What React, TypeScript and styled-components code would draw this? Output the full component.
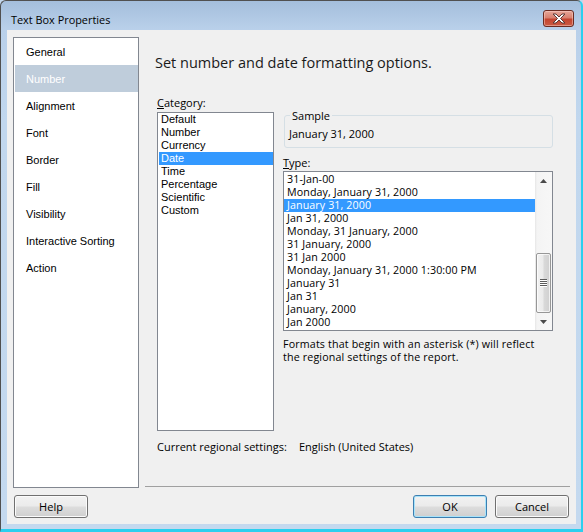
import React from "react";
import styled, { createGlobalStyle } from "styled-components";

const UI = `"Open Sans", "Noto Sans", sans-serif`;
const SANS = `"Liberation Sans", Arial, sans-serif`;

const Global = createGlobalStyle`
  html, body { margin: 0; padding: 0; background: #c2d7ee; }
  #root { width: 583px; height: 532px; }
  * { box-sizing: border-box; }
`;

const Window = styled.div`
  width: 583px;
  height: 532px;
  display: flex;
  flex-direction: column;
  background: linear-gradient(to bottom, #a4bedc 0px, #b9d0ea 28px, #c1d7ee 120px, #c4d9ef 100%);
  border-top: 1px solid #505050;
  border-left: 1px solid #505050;
  border-right: 2px solid #2ccfee;
  border-bottom: 3px solid #2ccfee;
  border-radius: 6px 6px 0 0;
  padding: 0 5px 4px 6px;
`;

const TitleBar = styled.div`
  height: 29px;
  display: flex;
  align-items: flex-start;
  justify-content: space-between;
`;

const Title = styled.span`
  margin: 11px 0 0 4px;
  font: 10.9px/15px ${UI};
  color: #000;
`;

const CloseButton = styled.div`
  width: 31px;
  height: 17px;
  margin: 9px 2px 0 0;
  border: 1px solid #6b2b21;
  border-radius: 3px;
  background: linear-gradient(to bottom, #e6a698 0%, #d8806f 45%, #c4442f 55%, #cb5b43 100%);
  box-shadow: inset 0 0 0 1px rgba(255, 220, 210, 0.45);
  display: flex;
  align-items: center;
  justify-content: center;
`;

const Client = styled.div`
  height: 494px;
  background: #f0f0f0;
  display: grid;
  grid-template-columns: 126px 1fr;
  grid-template-rows: 451px 1fr;
  column-gap: 6px;
  padding: 7px 6px 0 6px;
`;

const Nav = styled.div`
  border: 1px solid #828790;
  background: #fff;
  height: 451px;
`;

const NavItem = styled.div<{ $active?: boolean }>`
  height: 27px;
  margin-left: 1px;
  padding-left: 11px;
  display: flex;
  align-items: center;
  font: 11px ${SANS};
  color: ${(p) => (p.$active ? "#ffffff" : "#000000")};
  background: ${(p) => (p.$active ? "#bfcddb" : "transparent")};
`;

const Content = styled.div`
  height: 450px;
  border-bottom: 1px solid #a0a0a0;
  padding: 15px 0 0 12px;
`;

const Heading = styled.div`
  margin-left: -2px;
  font: 14.5px/21px ${UI};
  color: #1a1a1a;
`;

const Columns = styled.div`
  margin-top: 21px;
  display: grid;
  grid-template-columns: 117px 270px;
  column-gap: 9px;
  align-items: start;
`;

const Column = styled.div`
  display: flex;
  flex-direction: column;
`;

const Label = styled.div`
  height: 18px;
  padding-top: 1px;
  font: 11px/15px ${UI};
  color: #000;
`;

const CategoryList = styled.div`
  height: 319px;
  border: 1px solid #828790;
  background: #fff;
  padding-left: 1px;
`;

const CategoryItem = styled.div<{ $selected?: boolean }>`
  height: 13px;
  line-height: 13px;
  padding-left: 2px;
  font-family: ${SANS};
  font-size: 11px;
  white-space: nowrap;
  color: ${(p) => (p.$selected ? "#fff" : "#000")};
  background: ${(p) => (p.$selected ? "#3399ff" : "transparent")};
`;

const GroupBox = styled.fieldset`
  margin: 14px 0 0 1px;
  width: 269px;
  padding: 3px 4px 6px 4px;
  border: 1px solid #d5dfe5;
  border-radius: 3px;
  min-width: 0;
`;

const Legend = styled.legend`
  padding: 0 2px;
  margin-left: 1px;
  font: 11px/15px ${UI};
  color: #000;
`;

const SampleText = styled.div`
  font: 11px/15px ${UI};
  color: #000;
`;

const TypeLabel = styled.div`
  margin-top: 7px;
  height: 16px;
  font: 11px/15px ${UI};
  color: #000;
`;

const TypeList = styled.div`
  height: 160px;
  border: 1px solid #828790;
  background: #fff;
  display: flex;
`;

const TypeItems = styled.div`
  flex: 1;
  overflow: hidden;
  padding-top: 1px;
`;

const TypeItem = styled.div<{ $selected?: boolean }>`
  height: 13px;
  padding-left: 3px;
  line-height: 13px;
  font-family: ${UI};
  font-size: 10.7px;
  letter-spacing: 0.1px;
  white-space: nowrap;
  color: ${(p) => (p.$selected ? "#fff" : "#000")};
  background: ${(p) => (p.$selected ? "#3399ff" : "transparent")};
`;

const Scrollbar = styled.div`
  width: 17px;
  display: flex;
  flex-direction: column;
  background: linear-gradient(to right, #e6e6e6 0px, #f4f4f4 2px, #f7f7f7 100%);
`;

const ArrowButton = styled.div`
  height: 17px;
  display: flex;
  align-items: center;
  justify-content: center;
`;

const Track = styled.div`
  flex: 1;
  display: flex;
  flex-direction: column;
  justify-content: flex-end;
  padding: 0 1px;
`;

const Thumb = styled.div`
  height: 60px;
  border: 1px solid #979797;
  border-radius: 2px;
  background: linear-gradient(to right, #f2f2f2 0%, #ebebeb 45%, #d9d9d9 55%, #d0d0d0 100%);
  box-shadow: inset 0 0 0 1px rgba(255, 255, 255, 0.7);
  display: flex;
  align-items: center;
  justify-content: center;
`;

const Note = styled.div`
  margin-top: 7px;
  display: flex;
  flex-direction: column;
`;

const NoteLine = styled.div`
  height: 13px;
  font: 10.7px/13px ${UI};
  letter-spacing: 0.15px;
  white-space: nowrap;
  color: #000;
`;

const Regional = styled.div`
  grid-column: 1 / -1;
  margin-top: 8px;
  display: flex;
  font: 11px/15px ${UI};
  color: #000;
`;

const RegionalLabel = styled.span`
  width: 142px;
`;

const Footer = styled.div`
  grid-column: 1 / -1;
  display: flex;
  align-items: flex-start;
  gap: 8px;
  padding: 7px 1px 0 1px;
`;

const Button = styled.button<{ $default?: boolean; $push?: boolean }>`
  width: 74px;
  height: 23px;
  margin-left: ${(p) => (p.$push ? "auto" : "0")};
  padding: 0;
  border: 1px solid ${(p) => (p.$default ? "#3c7fb1" : "#707070")};
  border-radius: 3px;
  background: linear-gradient(to bottom, #f2f2f2 0%, #ebebeb 48%, #dddddd 52%, #cfcfcf 100%);
  box-shadow: inset 0 0 0 1px ${(p) => (p.$default ? "#a8e3fa" : "#fbfbfb")};
  font: 11px ${UI};
  color: #000;
`;

const navItems = [
  "General",
  "Number",
  "Alignment",
  "Font",
  "Border",
  "Fill",
  "Visibility",
  "Interactive Sorting",
  "Action",
];

const categories = ["Default", "Number", "Currency", "Date", "Time", "Percentage", "Scientific", "Custom"];

const types = [
  "31-Jan-00",
  "Monday, January 31, 2000",
  "January 31, 2000",
  "Jan 31, 2000",
  "Monday, 31 January, 2000",
  "31 January, 2000",
  "31 Jan 2000",
  "Monday, January 31, 2000 1:30:00 PM",
  "January 31",
  "Jan 31",
  "January, 2000",
  "Jan 2000",
];

export default function App() {
  return (
    <>
      <Global />
      <Window>
        <TitleBar>
          <Title>Text Box Properties</Title>
          <CloseButton>
            <svg width="14" height="11" viewBox="-7 -5.5 14 11">
              <polygon
                points="-6,-4.5 -3,-4.5 0,-1.5 3,-4.5 6,-4.5 1.5,0 6,4.5 3,4.5 0,1.5 -3,4.5 -6,4.5 -1.5,0"
                fill="#ffffff"
                stroke="#5a3a36"
                strokeWidth="1"
                strokeLinejoin="round"
              />
            </svg>
          </CloseButton>
        </TitleBar>
        <Client>
          <Nav>
            {navItems.map((n) => (
              <NavItem key={n} $active={n === "Number"}>
                {n}
              </NavItem>
            ))}
          </Nav>
          <Content>
            <Heading>Set number and date formatting options.</Heading>
            <Columns>
              <Column>
                <Label>
                  <u>C</u>ategory:
                </Label>
                <CategoryList>
                  {categories.map((c) => (
                    <CategoryItem key={c} $selected={c === "Date"}>
                      {c}
                    </CategoryItem>
                  ))}
                </CategoryList>
              </Column>
              <Column>
                <GroupBox>
                  <Legend>Sample</Legend>
                  <SampleText>January 31, 2000</SampleText>
                </GroupBox>
                <TypeLabel>
                  <u>T</u>ype:
                </TypeLabel>
                <TypeList>
                  <TypeItems>
                    {types.map((t, i) => (
                      <TypeItem key={i} $selected={i === 2}>
                        {t}
                      </TypeItem>
                    ))}
                  </TypeItems>
                  <Scrollbar>
                    <ArrowButton>
                      <svg width="7" height="4" viewBox="0 0 7 4">
                        <polygon points="0,4 3.5,0 7,4" fill="#4a4a4a" />
                      </svg>
                    </ArrowButton>
                    <Track>
                      <Thumb>
                        <svg width="7" height="8" viewBox="0 0 7 8">
                          <g fill="#5c5c5c">
                            <rect x="0" y="0" width="7" height="1" />
                            <rect x="0" y="2" width="7" height="1" />
                            <rect x="0" y="4" width="7" height="1" />
                            <rect x="0" y="6" width="7" height="1" />
                          </g>
                          <g fill="#ffffff">
                            <rect x="0" y="1" width="7" height="1" />
                            <rect x="0" y="3" width="7" height="1" />
                            <rect x="0" y="5" width="7" height="1" />
                            <rect x="0" y="7" width="7" height="1" />
                          </g>
                        </svg>
                      </Thumb>
                    </Track>
                    <ArrowButton>
                      <svg width="7" height="4" viewBox="0 0 7 4">
                        <polygon points="0,0 7,0 3.5,4" fill="#4a4a4a" />
                      </svg>
                    </ArrowButton>
                  </Scrollbar>
                </TypeList>
                <Note>
                  <NoteLine>Formats that begin with an asterisk (*) will reflect</NoteLine>
                  <NoteLine>the regional settings of the report.</NoteLine>
                </Note>
              </Column>
              <Regional>
                <RegionalLabel>Current regional settings:</RegionalLabel>
                <span>English (United States)</span>
              </Regional>
            </Columns>
          </Content>
          <Footer>
            <Button>Help</Button>
            <Button $default $push>
              OK
            </Button>
            <Button>Cancel</Button>
          </Footer>
        </Client>
      </Window>
    </>
  );
}
